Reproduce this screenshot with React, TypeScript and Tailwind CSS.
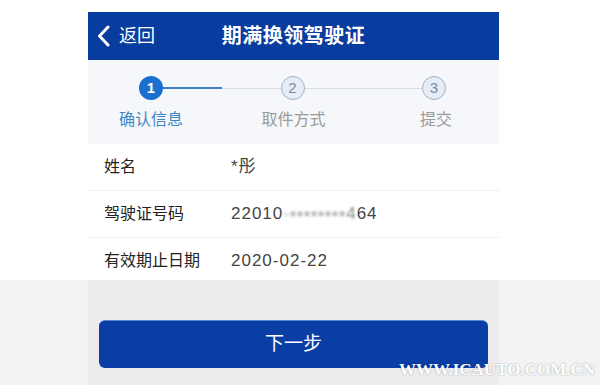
import React from 'react'

const FONT = "font-['Liberation_Sans','Noto_Sans_CJK_SC',sans-serif]"

const ROWS = [
  { label: '姓名', value: '*彤' },
  { label: '驾驶证号码', value: 'id' },
  { label: '有效期止日期', value: '2020-02-22' },
]

function StepDot({ n, active }: { n: number; active?: boolean }) {
  return active ? (
    <div className="flex h-6 w-6 shrink-0 items-center justify-center rounded-full bg-[#1a6fd1] text-[15px] font-bold text-white">
      {n}
    </div>
  ) : (
    <div className="flex h-6 w-6 shrink-0 items-center justify-center rounded-full border border-[#a3b2c4] bg-[#e5edf7] text-[15px] text-[#7b8ba0]">
      {n}
    </div>
  )
}

export default function App() {
  return (
    <div className={`relative flex h-[385px] w-[600px] flex-col overflow-hidden bg-white ${FONT}`}>
      {/* upper part */}
      <div className="h-[280px] pt-[12px]">
        <div className="ml-[88px] flex h-[268px] w-[411px] flex-col">
          <header className="relative flex h-[48px] shrink-0 items-center justify-center bg-[#083c9f]">
            <div className="absolute left-[9px] top-0 flex h-full items-center gap-[9px] text-white">
              <svg viewBox="0 0 13 22" className="h-[22px] w-[13px]" fill="none" stroke="currentColor" strokeWidth={3} strokeLinecap="round" strokeLinejoin="round">
                <path d="M11 2 2.5 11l8.5 9" />
              </svg>
              <span className="text-[18px] leading-none">返回</span>
            </div>
            <span className="text-[20px] font-bold tracking-[0.5px] text-white">期满换领驾驶证</span>
          </header>

          {/* steps */}
          <div className="flex h-[84px] shrink-0 flex-col bg-[#f5f7fa] pt-[16px]">
            <div className="flex items-center pl-[51px] pr-[53px]">
              <StepDot n={1} active />
              <div className="flex flex-1 items-center">
                <div className="h-[2px] flex-1 bg-[#3f80c3]" />
                <div className="h-px flex-1 bg-[#d5dde7]" />
              </div>
              <StepDot n={2} />
              <div className="h-px flex-1 bg-[#d5dde7]" />
              <StepDot n={3} />
            </div>
            <div className="mt-[12px] flex justify-between px-[31px] text-[16px] leading-none">
              <span className="w-16 whitespace-nowrap text-center text-[#3f87c6]">确认信息</span>
              <span className="w-16 whitespace-nowrap text-center text-[#9a9a9a]">取件方式</span>
              <span className="w-16 whitespace-nowrap text-center text-[#9a9a9a]">提交</span>
            </div>
          </div>

          {/* info rows */}
          <div className="flex flex-1 flex-col bg-white">
            {ROWS.map((r, i) => (
              <div
                key={r.label}
                className={
                  i < ROWS.length - 1
                    ? 'flex h-[47px] shrink-0 items-center border-b border-[#f0f0f0] px-[16px]'
                    : 'flex flex-1 items-center px-[16px] pt-[4px]'
                }
              >
                <span className="w-[127px] text-[16px] text-[#222]">{r.label}</span>
                {r.value === 'id' ? (
                  <span className="flex items-center text-[17px] tracking-[1px] text-[#444]">
                    22010
                    <span className="inline-block blur-[1.5px] text-[#a8a8a8]">-▪▪▪▪▪▪▪▪</span>
                    <span className="inline-block blur-[1px] text-[#888]">4</span>
                    64
                  </span>
                ) : (
                  <span className="text-[17px] tracking-[1px] text-[#444]">{r.value}</span>
                )}
              </div>
            ))}
          </div>
        </div>
      </div>

      {/* bottom action area */}
      <div className="flex-1 bg-[#f3f3f4]">
        <div className="ml-[88px] h-full w-[411px] bg-[#ececee] px-[11px] pt-[40px]">
          <button className="flex h-[48px] w-full items-center justify-center rounded-[6px] border-t border-[#5b86d6] bg-[#0a3ea4] text-[19px] text-white">
            下一步
          </button>
        </div>
      </div>

      <span className="absolute bottom-[3px] right-[5px] font-['Liberation_Serif',serif] text-[17px] font-bold text-white [text-shadow:0_0_2px_rgba(0,0,0,0.35)]">
        WWW.ICAUTO.COM.CN
      </span>
    </div>
  )
}
